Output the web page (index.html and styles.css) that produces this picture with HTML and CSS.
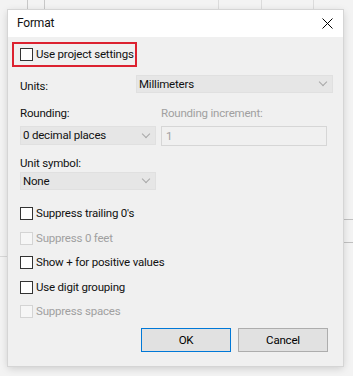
FILE: index.html
```html
<!DOCTYPE html>
<html lang="en">
<head>
	<meta charset="UTF-8">
	<title>Format</title>
	<link rel="stylesheet" href="styles.css">
</head>
<body>
<div class="dialog">
	<div class="titlebar">
		<span class="title">Format</span>
		<svg class="close" width="11" height="11" viewBox="0 0 11 11"><path d="M0.5 0.5L10.5 10.5M10.5 0.5L0.5 10.5" stroke="#000" stroke-width="1"/></svg>
	</div>
	<div class="content">
		<div class="highlight">
			<label class="check"><span class="box"></span>Use project settings</label>
		</div>
		<div class="units">
			<span class="label">Units:</span>
			<div class="select wide"><span>Millimeters</span><i class="chev"></i></div>
		</div>
		<div class="rounding">
			<span class="label">Rounding:</span>
			<span class="label off">Rounding increment:</span>
			<div class="select"><span>0 decimal places</span><i class="chev"></i></div>
			<div class="input">1</div>
		</div>
		<div class="symbol">
			<span class="label">Unit symbol:</span>
			<div class="select"><span>None</span><i class="chev"></i></div>
		</div>
		<ul class="options">
			<li class="check"><span class="box"></span>Suppress trailing 0's</li>
			<li class="check off"><span class="box"></span>Suppress 0 feet</li>
			<li class="check"><span class="box"></span>Show + for positive values</li>
			<li class="check"><span class="box"></span>Use digit grouping</li>
			<li class="check off"><span class="box"></span>Suppress spaces</li>
		</ul>
		<div class="buttons">
			<button class="btn default">OK</button>
			<button class="btn">Cancel</button>
		</div>
	</div>
</div>
</body>
</html>
```

FILE: styles.css
```css
body,div,ul,li,span {margin:0;padding:0;}
body {
	width:353px;
	height:376px;
	overflow:hidden;
	background:
		linear-gradient(#c8c8c8,#c8c8c8) 27px 0/1px 10px no-repeat,
		linear-gradient(#c8c8c8,#c8c8c8) 44px 0/1px 10px no-repeat,
		linear-gradient(#dcdcdc,#dcdcdc) 218px 0/1px 10px no-repeat,
		linear-gradient(#dcdcdc,#dcdcdc) 261px 0/1px 10px no-repeat,
		linear-gradient(#dcdcdc,#dcdcdc) 313px 0/1px 10px no-repeat,
		linear-gradient(#c0c0c0,#c0c0c0) 343px 219px/10px 1px no-repeat,
		linear-gradient(#c0c0c0,#c0c0c0) 343px 242px/10px 1px no-repeat,
		linear-gradient(#d8d8d8,#d8d8d8) 0 256px/8px 1px no-repeat,
		#f3f3f3;
	font:11.5px/15px Roboto, "Liberation Sans", sans-serif;
	letter-spacing:-0.2px;
	color:#111;
}
.dialog {
	width:335px;
	height:356px;
	margin:10px 0 0 8px;
	background:#f0f0f0;
	box-shadow:0 0 0 1px #d5d5d5, 0 2px 8px rgba(0,0,0,0.18);
	display:flex;
	flex-direction:column;
}
.titlebar {
	height:27px;
	background:#fff;
	display:flex;
	align-items:center;
	justify-content:space-between;
	padding:0 10px 0 9px;
}
.title {
	font-size:12px;
}
.content {
	padding:5px 10px 0 4px;
}
.highlight {
	width:125px;
	height:25px;
	box-sizing:border-box;
	border:2px solid #dc2230;
	display:flex;
	align-items:center;
	padding-left:6px;
}
.check {
	display:flex;
	align-items:center;
	height:13px;
	white-space:nowrap;
}
.box {
	width:11px;
	height:11px;
	border:1px solid #333;
	background:#fff;
	margin-right:3px;
	flex:none;
}
.off {
	color:#a0a0a0;
}
.check.off .box {
	border-color:#d4d4d4;
	background:#f6f6f6;
}
.units {
	display:flex;
	align-items:center;
	margin:8px 0 0 8px;
	height:18px;
}
.units .label {
	width:116px;
	padding-top:4px;
}
.select {
	height:18px;
	background:#e6e6e6;
	border:1px solid #e0e0e0;
	box-sizing:border-box;
	display:flex;
	align-items:center;
	justify-content:space-between;
	padding:0 6px 0 2px;
	width:136px;
}
.select.wide {
	width:197px;
}
.chev {
	width:5px;
	height:5px;
	border:solid #a8a8a8;
	border-width:0 1px 1px 0;
	transform:translateY(-2px) rotate(45deg);
}
.rounding {
	display:grid;
	grid-template-columns:136px 166px;
	grid-template-rows:15px 19px;
	column-gap:5px;
	row-gap:5px;
	margin:13px 0 0 8px;
}
.rounding .select {
	height:19px;
}
.input {
	height:20px;
	box-sizing:border-box;
	border:1px solid #d6d6d6;
	color:#a0a0a0;
	padding:2px 0 0 4px;
}
.symbol {
	display:flex;
	flex-direction:column;
	gap:1px;
	margin:11px 0 0 8px;
}
.options {
	list-style:none;
	margin:17px 0 0 8px;
}
.options li {
	height:13px;
	margin-bottom:11.5px;
}
.options li:last-child {
	margin-bottom:10px;
}
.buttons {
	display:flex;
	justify-content:flex-end;
	gap:7px;
	margin:0 5px 0 0;
}
.btn {
	width:90px;
	height:24px;
	background:#e1e1e1;
	border:1px solid #adadad;
	font:inherit;
	letter-spacing:inherit;
	color:#000;
	padding:0;
}
.btn.default {
	border-color:#0078d7;
	box-shadow:inset 0 0 0 1px #e1e1e1;
}
```
